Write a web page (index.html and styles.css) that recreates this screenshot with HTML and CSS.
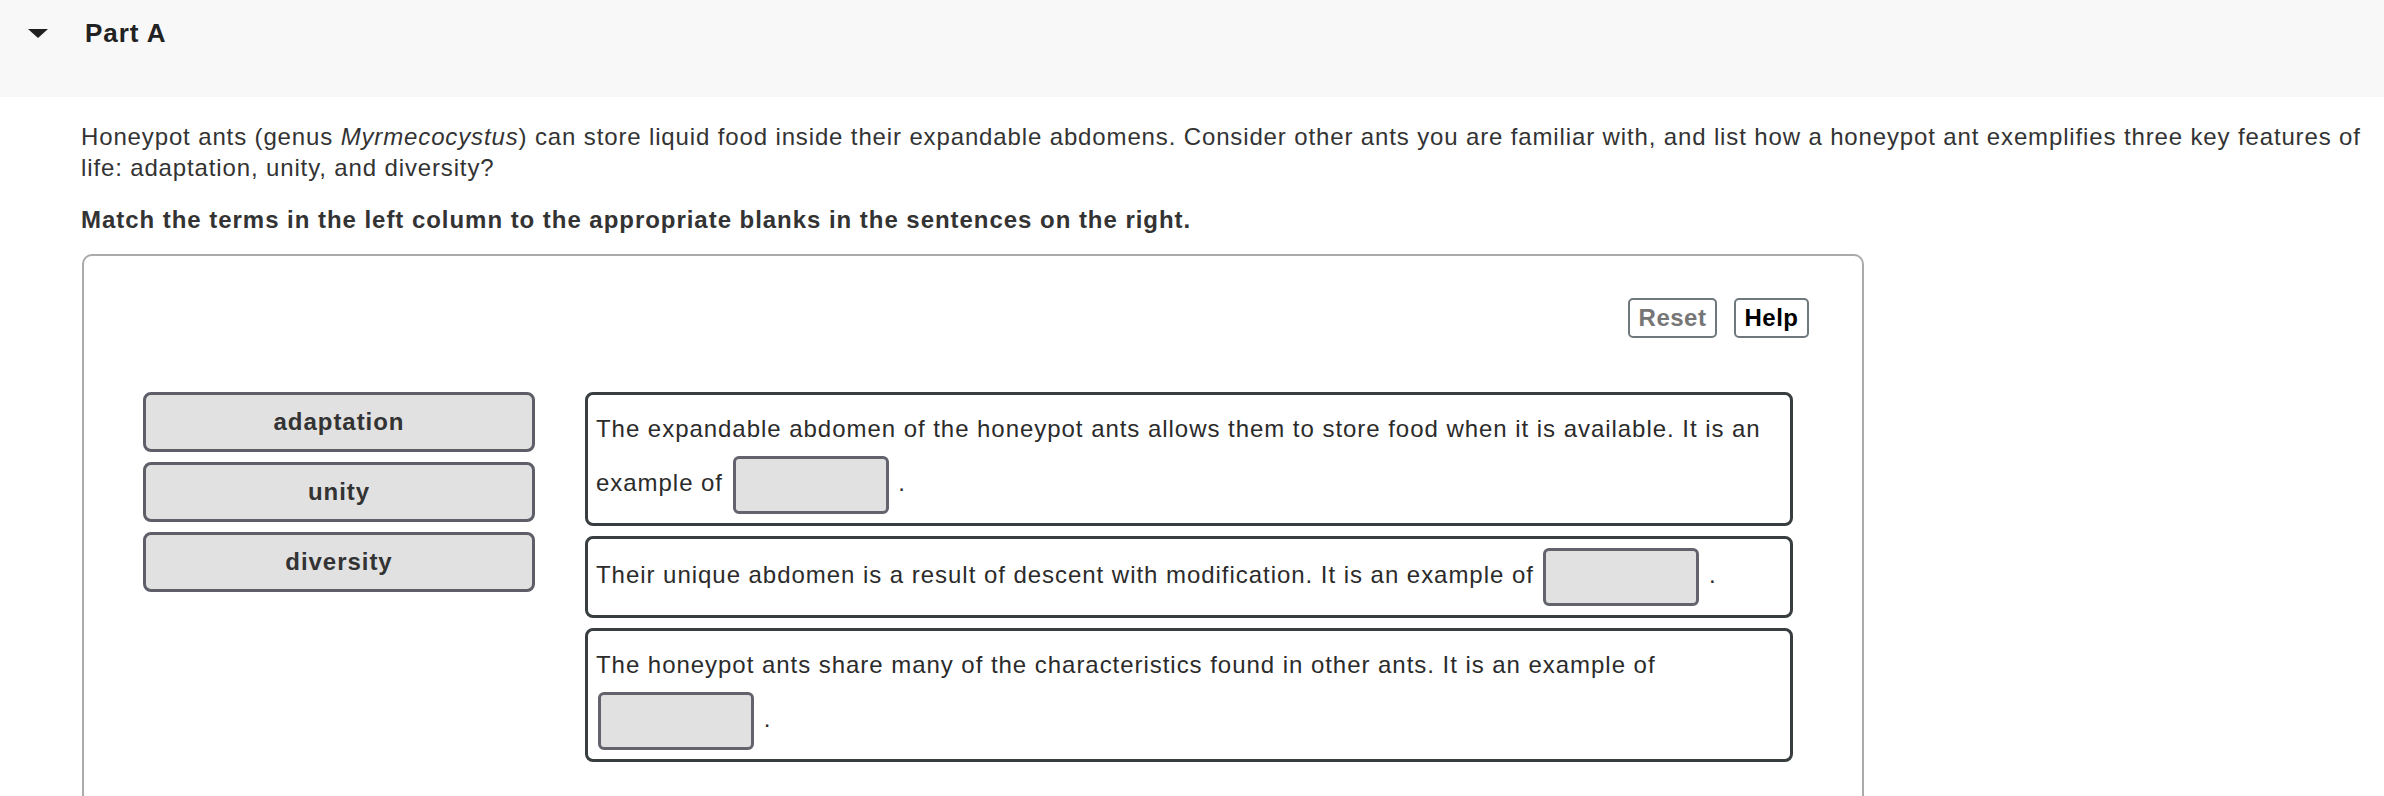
FILE: index.html
```html
<!DOCTYPE html>
<html lang="en">
<head>
<meta charset="utf-8">
<title>Part A</title>
<link rel="stylesheet" href="styles.css">
</head>
<body>
<header class="part-header">
  <span class="caret" aria-hidden="true"></span>
  <h2 class="part-title">Part A</h2>
</header>
<main class="content">
  <p class="prompt">Honeypot ants (genus <em>Myrmecocystus</em>) can store liquid food inside their expandable abdomens. Consider other ants you are familiar with, and list how a honeypot ant exemplifies three key features of life: adaptation, unity, and diversity?</p>
  <p class="instructions">Match the terms in the left column to the appropriate blanks in the sentences on the right.</p>
  <section class="panel">
    <div class="toolbar">
      <button class="btn btn-reset" type="button">Reset</button>
      <button class="btn btn-help" type="button">Help</button>
    </div>
    <div class="dnd">
      <div class="terms">
        <div class="term">adaptation</div>
        <div class="term">unity</div>
        <div class="term">diversity</div>
      </div>
      <div class="sentences">
        <div class="sentence">The expandable abdomen of the honeypot ants allows them to store food when it is available. It is an example of <span class="blank"></span> .</div>
        <div class="sentence">Their unique abdomen is a result of descent with modification. It is an example of <span class="blank"></span> .</div>
        <div class="sentence">The honeypot ants share many of the characteristics found in other ants. It is an example of <span class="blank"></span> .</div>
      </div>
    </div>
  </section>
</main>
</body>
</html>
```
FILE: styles.css
```css
html, body {
  margin: 0;
  padding: 0;
  background: #ffffff;
}
body {
  font-family: "Liberation Sans", Arial, Helvetica, sans-serif;
  color: #333333;
  font-size: 24px;
  letter-spacing: 0.04em;
}

.part-header {
  height: 97px;
  box-sizing: border-box;
  background: #f8f8f8;
  display: flex;
  align-items: flex-start;
  padding-top: 18px;
  padding-left: 28px;
}
.caret {
  width: 0;
  height: 0;
  margin-top: 11px;
  border-left: 10.5px solid transparent;
  border-right: 10.5px solid transparent;
  border-top: 9px solid #1f1f1f;
  margin-right: 37px;
}
.part-title {
  margin: 0;
  font-size: 26px;
  line-height: 30px;
  font-weight: bold;
  color: #222222;
}

.content {
  padding: 0 3px 0 81px;
}
.prompt {
  margin: 24px 0 0 0;
  line-height: 31px;
  letter-spacing: 0.036em;
}
.prompt em {
  font-style: italic;
}
.instructions {
  margin: 21px 0 0 0;
  line-height: 31px;
  font-weight: bold;
}

.panel {
  margin-top: 19px;
  margin-left: 1px;
  width: 1782px;
  box-sizing: border-box;
  border: 2px solid #aaaaaa;
  border-radius: 10px;
  padding: 42px 53px 80px 59px;
}
.toolbar {
  display: flex;
  justify-content: flex-end;
  gap: 17px;
}
.btn {
  height: 40px;
  box-sizing: border-box;
  padding: 0;
  border: 2px solid #6f797d;
  border-radius: 5px;
  background: #ffffff;
  font-family: inherit;
  font-size: 24px;
  letter-spacing: 0.02em;
  font-weight: bold;
  line-height: 36px;
  text-align: center;
}
.btn-reset { color: #767676; width: 89px; }
.btn-help { color: #000000; width: 75px; }

.dnd {
  display: flex;
  align-items: flex-start;
  gap: 50px;
  margin-top: 54px;
}
.terms {
  display: flex;
  flex-direction: column;
  gap: 10px;
  width: 392px;
  flex: none;
}
.term {
  height: 60px;
  box-sizing: border-box;
  border: 3px solid #5d5e68;
  border-radius: 8px;
  background: #e1e1e1;
  font-weight: bold;
  color: #333333;
  display: flex;
  align-items: center;
  justify-content: center;
}
.sentences {
  display: flex;
  flex-direction: column;
  gap: 10px;
  width: 1208px;
  flex: none;
}
.sentence {
  box-sizing: border-box;
  border: 3px solid #383d40;
  border-radius: 8px;
  padding: 8px 8px;
  line-height: 52px;
  color: #2b2b2b;
}
.blank {
  display: inline-block;
  box-sizing: border-box;
  width: 156px;
  height: 58px;
  margin: 1px 2px;
  border: 3px solid #62636d;
  border-radius: 6px;
  background: #e1e1e1;
  vertical-align: middle;
}
```
